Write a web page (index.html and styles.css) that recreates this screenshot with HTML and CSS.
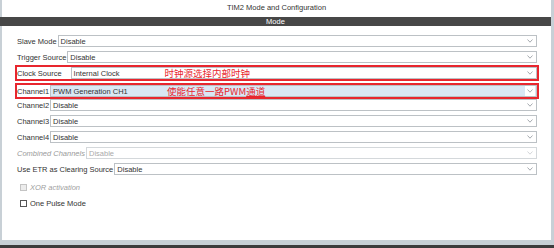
FILE: index.html
```html
<!DOCTYPE html>
<html lang="zh-CN">
<head>
    <meta charset="UTF-8">
    <meta name="viewport" content="width=device-width, initial-scale=1.0">
    <title>TIM2 Mode and Configuration</title>
    <link rel="stylesheet" href="styles.css">
</head>
<body>
    <div class="window">
        <div class="title">TIM2 Mode and Configuration</div>
        <div class="bar">Mode</div>

        <div class="form">
            <div class="row">
                <span class="label">Slave Mode</span>
                <div class="field"><span class="value">Disable</span><span class="arrow"><svg width="6" height="4" viewBox="0 0 6 4"><polyline points="0.5,0.5 3,3.2 5.5,0.5"/></svg></span></div>
            </div>
            <div class="row">
                <span class="label">Trigger Source</span>
                <div class="field"><span class="value">Disable</span><span class="arrow"><svg width="6" height="4" viewBox="0 0 6 4"><polyline points="0.5,0.5 3,3.2 5.5,0.5"/></svg></span></div>
            </div>
            <div class="row marked">
                <span class="label wide">Clock Source</span>
                <div class="field">
                    <span class="value">Internal Clock</span>
                    <span class="arrow"><svg width="6" height="4" viewBox="0 0 6 4"><polyline points="0.5,0.5 3,3.2 5.5,0.5"/></svg></span>
                    <span class="note note-clock">时钟源选择内部时钟</span>
                </div>
            </div>
            <div class="row marked">
                <span class="label">Channel1</span>
                <div class="field selected">
                    <span class="value">PWM Generation CH1</span>
                    <span class="arrow"><svg width="6" height="4" viewBox="0 0 6 4"><polyline points="0.5,0.5 3,3.2 5.5,0.5"/></svg></span>
                    <span class="note note-channel">使能任意一路PWM<u>通道</u></span>
                </div>
            </div>
            <div class="row">
                <span class="label">Channel2</span>
                <div class="field"><span class="value">Disable</span><span class="arrow"><svg width="6" height="4" viewBox="0 0 6 4"><polyline points="0.5,0.5 3,3.2 5.5,0.5"/></svg></span></div>
            </div>
            <div class="row">
                <span class="label">Channel3</span>
                <div class="field"><span class="value">Disable</span><span class="arrow"><svg width="6" height="4" viewBox="0 0 6 4"><polyline points="0.5,0.5 3,3.2 5.5,0.5"/></svg></span></div>
            </div>
            <div class="row">
                <span class="label">Channel4</span>
                <div class="field"><span class="value">Disable</span><span class="arrow"><svg width="6" height="4" viewBox="0 0 6 4"><polyline points="0.5,0.5 3,3.2 5.5,0.5"/></svg></span></div>
            </div>
            <div class="row disabled">
                <span class="label">Combined Channels</span>
                <div class="field"><span class="value">Disable</span><span class="arrow"><svg width="6" height="4" viewBox="0 0 6 4"><polyline points="0.5,0.5 3,3.2 5.5,0.5"/></svg></span></div>
            </div>
            <div class="row">
                <span class="label">Use ETR as Clearing Source</span>
                <div class="field"><span class="value">Disable</span><span class="arrow"><svg width="6" height="4" viewBox="0 0 6 4"><polyline points="0.5,0.5 3,3.2 5.5,0.5"/></svg></span></div>
            </div>

            <div class="checks">
                <div class="check disabled"><span class="box"></span>XOR activation</div>
                <div class="check"><span class="box"></span>One Pulse Mode</div>
            </div>
        </div>
    </div>
    <div class="footer"></div>
</body>
</html>
```

FILE: styles.css
```css
body {
    margin: 0;
    width: 554px;
    height: 248px;
    overflow: hidden;
    background-color: #c8d0d6;
    font-family: "Liberation Sans", Arial, sans-serif;
    font-size: 7.5px;
    color: #333;
}
.window {
    margin: 0 3px 0 2px;
    height: 240px;
    background-color: #fff;
}
.title {
    height: 17px;
    line-height: 16px;
    text-align: center;
    color: #333;
}
.bar {
    height: 9px;
    line-height: 9px;
    margin-left: -2px;
    background-color: #474747;
    color: #fff;
    text-align: center;
}
.form {
    display: flex;
    flex-direction: column;
    padding: 9px 14px 0 15px;
}
.row {
    display: flex;
    align-items: center;
    height: 12px;
    margin-bottom: 4px;
}
.row.marked {
    height: 16px;
    box-sizing: border-box;
    margin: -2px -2px 0 -2px;
    border: 2px solid #e8262e;
}
.row.marked + .row.marked {
    margin-top: 2px;
}
.label {
    white-space: nowrap;
    margin-right: 1px;
}
.label.wide {
    margin-right: 9px;
}
.field {
    position: relative;
    flex: 1;
    height: 12px;
    box-sizing: border-box;
    display: flex;
    align-items: center;
    border: 1px solid #bcc1c5;
    padding-left: 2px;
    background-color: #fff;
}
.field.selected {
    background-color: #d9e7f4;
}
.value {
    flex: 1;
    white-space: nowrap;
}
.arrow {
    width: 10px;
    height: 10px;
    display: flex;
    align-items: center;
    justify-content: center;
    background-color: #fff;
    margin-right: 1px;
}
.arrow svg polyline {
    fill: none;
    stroke: #8f969c;
    stroke-width: 0.8;
}
.disabled .label {
    font-style: italic;
    color: #9a9a9a;
}
.disabled .field {
    border-color: #d4d8db;
    color: #aaa;
}
.disabled .arrow svg polyline {
    stroke: #c8cccf;
}
.note {
    position: absolute;
    top: -1px;
    font-family: "Noto Sans CJK SC", "Liberation Sans", sans-serif;
    font-size: 9.5px;
    line-height: 12px;
    color: #e8262e;
    white-space: nowrap;
}
.note-clock {
    left: 93px;
}
.note-channel {
    left: 116px;
}
.checks {
    display: flex;
    flex-direction: column;
    padding: 0 0 0 3px;
}
.check {
    display: flex;
    align-items: center;
    height: 16px;
}
.check .box {
    width: 7px;
    height: 7px;
    box-sizing: border-box;
    border: 1px solid #555;
    margin-right: 3px;
    background-color: #fff;
}
.check.disabled {
    font-style: italic;
    color: #a0a0a0;
}
.check.disabled .box {
    border-color: #c4c4c4;
    background-color: #ececec;
}
.footer {
    margin-top: 5px;
    height: 3px;
    background-color: #3c3c3c;
}
```
